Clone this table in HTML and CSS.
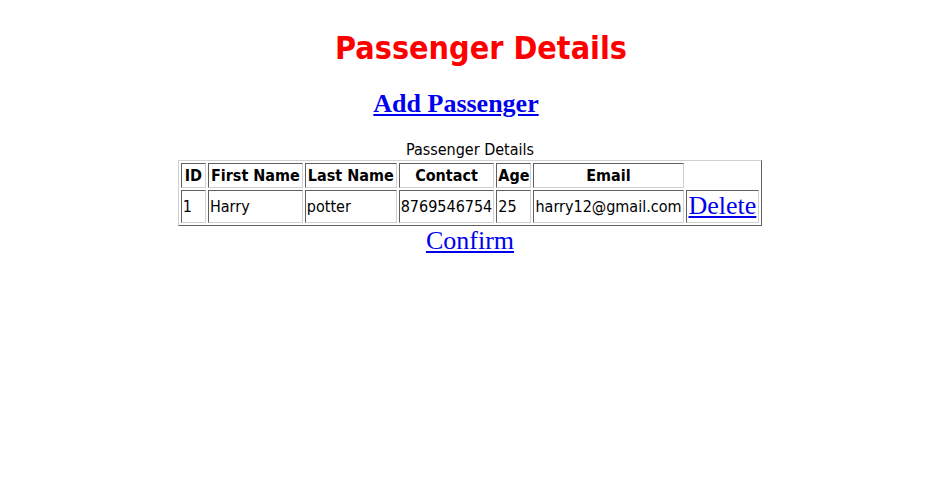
FILE: index.html
```html
<!DOCTYPE html>
<html>
<head>
<meta charset="utf-8">
<title>Passenger Details</title>
<link rel="stylesheet" href="styles.css">
</head>
<body>
<h1 class="title">Passenger Details</h1>
<h2 class="add"><a href="#">Add Passenger</a></h2>
<table class="grid">
  <caption>Passenger Details</caption>
  <tr>
    <th class="id">ID</th><th class="name">First Name</th><th class="name">Last Name</th><th class="wide">Contact</th><th>Age</th><th class="email">Email</th><th class="blank"></th>
  </tr>
  <tr>
    <td>1</td><td>Harry</td><td>potter</td><td>8769546754</td><td>25</td><td>harry12@gmail.com</td><td class="del"><a href="#">Delete</a></td>
  </tr>
</table>
<div class="confirm"><a href="#">Confirm</a></div>
</body>
</html>
```
FILE: styles.css
```css
body {
  margin: 8px;
  font-family: "DejaVu Sans Condensed", "DejaVu Sans", sans-serif;
  background: #fff;
  color: #000;
}
a { color: #0000ee; }
.title {
  color: #ff0000;
  text-align: center;
  font-size: 32px;
  margin: 22px 0 24px;
  padding-left: 22px;
  line-height: 36px;
}
.add {
  font-family: "Liberation Serif", serif;
  font-size: 26px;
  text-align: center;
  padding-right: 28px;
  margin: 0 0 22px;
  line-height: 28px;
}
.grid {
  margin: 0 auto;
  border: 1px solid;
  border-color: #d0d0d0 #606060 #606060 #d0d0d0;
  border-spacing: 2px;
  font-size: 16px;
}
.grid caption {
  font-size: 16px;
  line-height: 20px;
  padding-bottom: 0;
}
.grid th, .grid td {
  border: 1px solid;
  border-color: #606060 #d0d0d0 #d0d0d0 #606060;
  padding: 2px 1px 1px;
  text-align: left;
  line-height: 20px;
}
.grid th { text-align: center; }
.grid th.id { padding-left: 3px; padding-right: 3px; }
.grid th.name { padding-left: 2px; padding-right: 2px; }
.grid th.blank { border: none; }
.grid th.email { padding-left: 18px; padding-right: 18px; }
.grid th.wide { padding-left: 14px; padding-right: 14px; }
.grid td.del {
  font-family: "Liberation Serif", serif;
  font-size: 26px;
  line-height: 28px;
  padding: 1px 2px 2px;
}
.confirm {
  text-align: center;
  font-family: "Liberation Serif", serif;
  font-size: 26px;
  line-height: 30px;
}
```
